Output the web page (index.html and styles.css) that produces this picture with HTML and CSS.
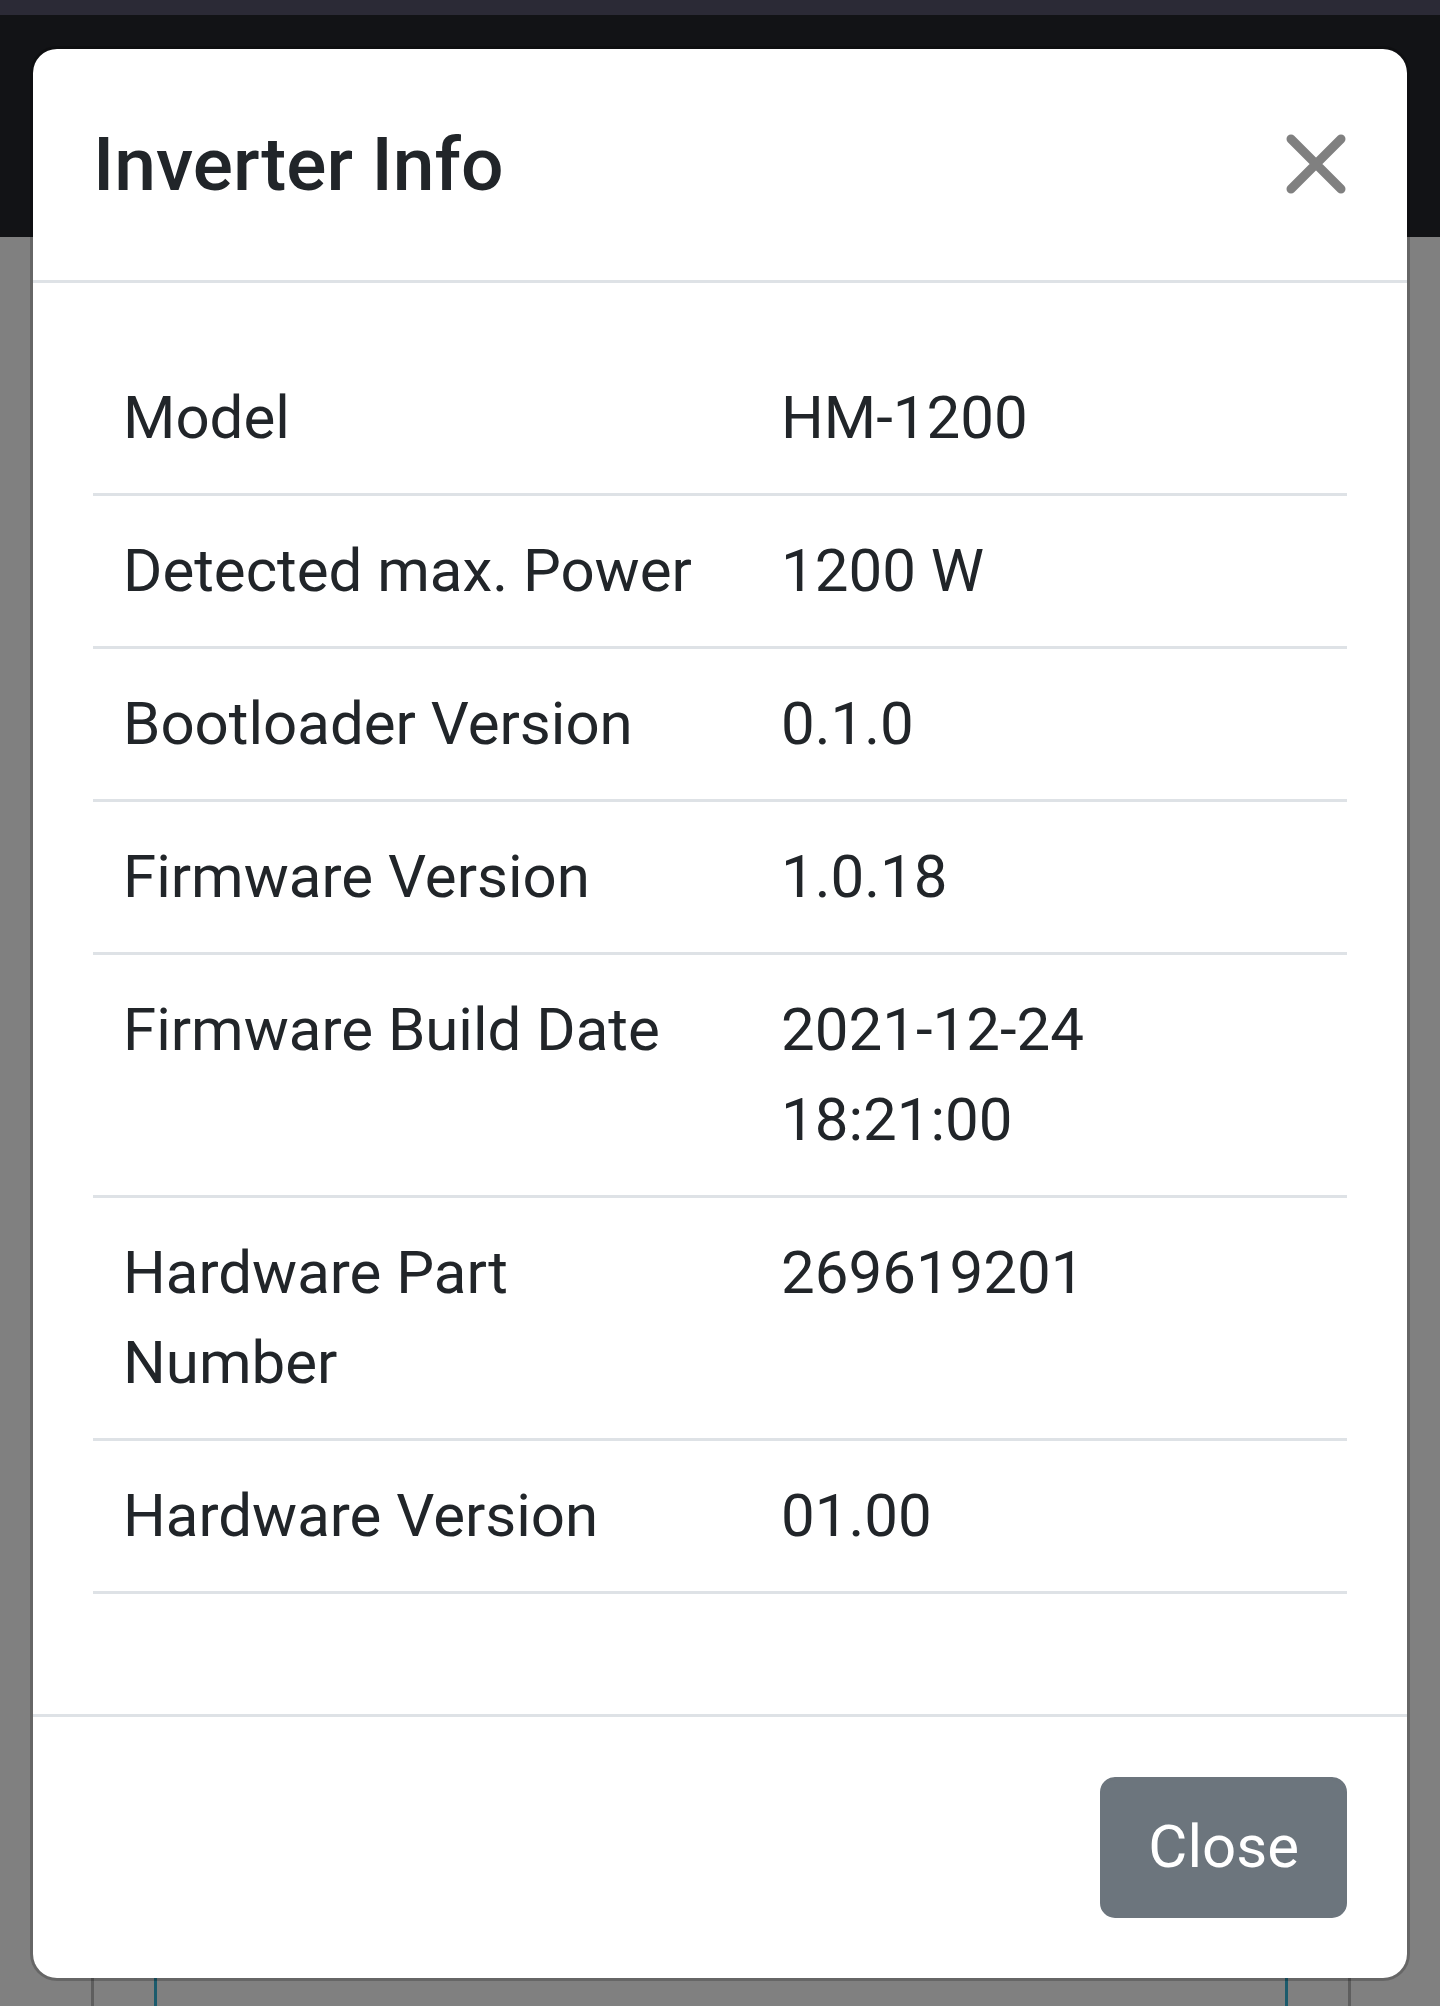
FILE: index.html
```html
<!DOCTYPE html>
<html lang="en">
<head>
<meta charset="utf-8">
<title>Inverter Info</title>
<link rel="stylesheet" href="styles.css">
</head>
<body>
<div class="page">
  <div class="statusbar"></div>
  <div class="navbar"></div>
  <div class="content">
    <div class="grid-lines">
      <div class="col c1"></div>
      <div class="col c2"></div>
      <div class="col c3"></div>
      <div class="col c4"></div>
    </div>
  </div>
</div>

<div class="modal">
  <div class="modal-header">
    <h5 class="modal-title">Inverter Info</h5>
    <button class="btn-close" aria-label="Close">
      <svg width="60" height="60" viewBox="0 0 60 60">
        <path d="M5 5 L55 55 M55 5 L5 55" stroke="#808080" stroke-width="9" stroke-linecap="round" fill="none"/>
      </svg>
    </button>
  </div>
  <div class="modal-body">
    <table class="info">
      <colgroup><col class="label-col"><col></colgroup>
      <tbody>
        <tr><td>Model</td><td>HM-1200</td></tr>
        <tr><td>Detected max. Power</td><td>1200 W</td></tr>
        <tr><td>Bootloader Version</td><td>0.1.0</td></tr>
        <tr><td>Firmware Version</td><td>1.0.18</td></tr>
        <tr><td>Firmware Build Date</td><td>2021-12-24 18:21:00</td></tr>
        <tr><td>Hardware Part Number</td><td>269619201</td></tr>
        <tr><td>Hardware Version</td><td>01.00</td></tr>
      </tbody>
    </table>
  </div>
  <div class="modal-footer">
    <button class="btn-secondary">Close</button>
  </div>
</div>
</body>
</html>
```

FILE: styles.css
```css
html, body {
  margin: 0;
  padding: 0;
}
body {
  background: #808080;
  font-family: Roboto, "Liberation Sans", sans-serif;
  color: #212529;
  width: 1440px;
  height: 2006px;
  overflow: hidden;
  position: relative;
}
.page {
  display: flex;
  flex-direction: column;
  height: 2006px;
}
.statusbar {
  height: 15px;
  background: #2b2a36;
}
.navbar {
  height: 222px;
  background: #121316;
}
.content {
  flex: 1;
  display: flex;
  flex-direction: column;
  justify-content: flex-end;
}
.grid-lines {
  height: 400px;
  display: flex;
  padding-left: 91px;
}
.col {
  width: 3px;
}
.c1 { background: #5e5e5e; }
.c2 { background: #1b5b6c; margin-left: 60px; }
.c3 { background: #1b5b6c; margin-left: 1128px; }
.c4 { background: #5e5e5e; margin-left: 60px; }

.modal {
  position: absolute;
  top: 46px;
  left: 30px;
  width: 1374px;
  background: #fff;
  background-clip: padding-box;
  border: 3px solid rgba(0, 0, 0, 0.2);
  border-radius: 27px;
  display: flex;
  flex-direction: column;
}
.modal-header {
  display: flex;
  align-items: center;
  justify-content: space-between;
  padding: 59px 60px;
  border-bottom: 3px solid #dee2e6;
}
.modal-title {
  margin: 0;
  font-size: 75px;
  font-weight: 500;
  line-height: 1.5;
  color: #212529;
}
.btn-close {
  border: 0;
  background: none;
  padding: 0;
  margin: 0 1px 0 0;
  width: 60px;
  height: 60px;
  display: flex;
}
.modal-body {
  padding: 60px 60px 60px;
}
.info {
  width: 100%;
  border-collapse: collapse;
  margin-bottom: 60px;
  table-layout: fixed;
}
.label-col {
  width: 658px;
}
.info td {
  font-size: 60px;
  line-height: 90px;
  padding: 30px 30px;
  vertical-align: top;
  border-bottom: 3px solid #dee2e6;
  color: #212529;
}
.modal-footer {
  display: flex;
  justify-content: flex-end;
  padding: 45px;
  border-top: 3px solid #dee2e6;
}
.btn-secondary {
  margin: 15px;
  font-family: Roboto, "Liberation Sans", sans-serif;
  font-size: 60px;
  line-height: 90px;
  padding: 22px 45px 23px;
  border: 3px solid #6c757d;
  background: #6c757d;
  color: #fff;
  border-radius: 15px;
}
```
